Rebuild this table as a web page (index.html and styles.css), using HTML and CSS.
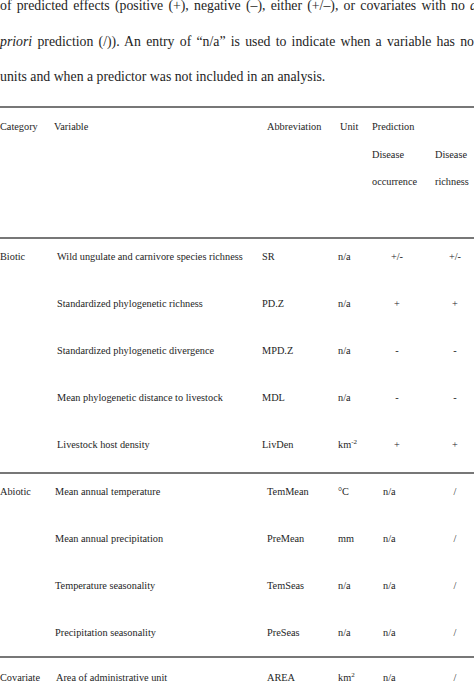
FILE: index.html
```html
<!DOCTYPE html>
<html>
<head>
<meta charset="utf-8">
<link rel="stylesheet" href="styles.css">
</head>
<body>
<div class="page">
  <div class="intro">
    <span class="line full wide">of predicted effects (positive (+), negative (–), either (+/–), or covariates with no <i>a</i></span>
    <span class="line full"><i>priori</i> prediction (/)). An entry of “n/a” is used to indicate when a variable has no</span>
    <span class="line">units and when a predictor was not included in an analysis.</span>
  </div>

  <div class="table">
    <div class="thead">
      <div class="hrow">
        <div class="c-cat">Category</div>
        <div class="c-var">Variable</div>
        <div class="c-abbr shift">Abbreviation</div>
        <div class="c-unit">Unit</div>
        <div class="c-pred">Prediction</div>
      </div>
      <div class="hrow sub">
        <div></div><div></div><div></div><div></div>
        <div class="c-occ-h">Disease<br>occurrence</div>
        <div class="c-rich-h">Disease<br>richness</div>
      </div>
    </div>

    <div class="group biotic">
      <div class="row">
        <div class="c-cat">Biotic</div>
        <div class="c-var">Wild ungulate and carnivore species richness</div>
        <div class="c-abbr">SR</div>
        <div class="c-unit">n/a</div>
        <div class="c-occ">+/-</div>
        <div class="c-rich">+/-</div>
      </div>
      <div class="row">
        <div class="c-cat"></div>
        <div class="c-var">Standardized phylogenetic richness</div>
        <div class="c-abbr">PD.Z</div>
        <div class="c-unit">n/a</div>
        <div class="c-occ">+</div>
        <div class="c-rich">+</div>
      </div>
      <div class="row">
        <div class="c-cat"></div>
        <div class="c-var">Standardized phylogenetic divergence</div>
        <div class="c-abbr">MPD.Z</div>
        <div class="c-unit">n/a</div>
        <div class="c-occ">-</div>
        <div class="c-rich">-</div>
      </div>
      <div class="row">
        <div class="c-cat"></div>
        <div class="c-var">Mean phylogenetic distance to livestock</div>
        <div class="c-abbr">MDL</div>
        <div class="c-unit">n/a</div>
        <div class="c-occ">-</div>
        <div class="c-rich">-</div>
      </div>
      <div class="row">
        <div class="c-cat"></div>
        <div class="c-var">Livestock host density</div>
        <div class="c-abbr">LivDen</div>
        <div class="c-unit">km<sup>-2</sup></div>
        <div class="c-occ">+</div>
        <div class="c-rich">+</div>
      </div>
    </div>

    <div class="group abiotic">
      <div class="row">
        <div class="c-cat">Abiotic</div>
        <div class="c-var">Mean annual temperature</div>
        <div class="c-abbr shift">TemMean</div>
        <div class="c-unit">°C</div>
        <div class="c-occ na">n/a</div>
        <div class="c-rich">/</div>
      </div>
      <div class="row">
        <div class="c-cat"></div>
        <div class="c-var">Mean annual precipitation</div>
        <div class="c-abbr shift">PreMean</div>
        <div class="c-unit">mm</div>
        <div class="c-occ na">n/a</div>
        <div class="c-rich">/</div>
      </div>
      <div class="row">
        <div class="c-cat"></div>
        <div class="c-var">Temperature seasonality</div>
        <div class="c-abbr shift">TemSeas</div>
        <div class="c-unit">n/a</div>
        <div class="c-occ na">n/a</div>
        <div class="c-rich">/</div>
      </div>
      <div class="row">
        <div class="c-cat"></div>
        <div class="c-var">Precipitation seasonality</div>
        <div class="c-abbr shift">PreSeas</div>
        <div class="c-unit">n/a</div>
        <div class="c-occ na">n/a</div>
        <div class="c-rich">/</div>
      </div>
    </div>

    <div class="group covariate">
      <div class="row">
        <div class="c-cat">Covariate</div>
        <div class="c-var">Area of administrative unit</div>
        <div class="c-abbr shift">AREA</div>
        <div class="c-unit">km<sup>2</sup></div>
        <div class="c-occ na">n/a</div>
        <div class="c-rich">/</div>
      </div>
    </div>
  </div>
</div>
</body>
</html>
```

FILE: styles.css
```css
html, body {
  margin: 0;
  padding: 0;
  background: #ffffff;
}

body {
  width: 474px;
  height: 686px;
  overflow: hidden;
  font-family: "Liberation Serif", "Times New Roman", serif;
  color: #1e1e1e;
}

.page {
  width: 478px;
}

.intro {
  margin: -12px 0 11px 0;
  font-size: 13.8px;
  line-height: 35.5px;
}

.intro .line {
  display: block;
  width: 474px;
  white-space: nowrap;
  text-align: left;
}

.intro .line.full {
  white-space: normal;
  text-align: justify;
  text-align-last: justify;
}

.intro .line.wide {
  width: 477px;
}

.table {
  font-size: 10.3px;
  line-height: 14px;
}

.thead {
  border-top: 2px solid #777777;
  padding: 12px 0 41.5px 0;
}

.hrow,
.row {
  display: grid;
  grid-template-columns: 54px 208px 75px 35px 62px 1fr;
}

.hrow.sub {
  margin-top: 7.5px;
  line-height: 27px;
}

.c-pred {
  grid-column: 5 / span 2;
}

.c-rich-h {
  padding-left: 1px;
}

.shift {
  padding-left: 5px;
}

.c-unit {
  padding-left: 1px;
}

.thead .c-unit {
  padding-left: 3px;
}

.group {
  border-top: 2px solid #777777;
  display: grid;
}

.biotic {
  grid-template-rows: repeat(4, 47px) 45px;
}

.biotic .c-var {
  padding-left: 3px;
}

.abiotic {
  grid-template-rows: repeat(3, 47px) 41px;
}

.abiotic .c-var {
  padding-left: 1px;
}

.covariate {
  grid-template-rows: 40px;
}

.covariate .row {
  padding-top: 13px;
}

.covariate .c-var {
  padding-left: 2px;
}

.row {
  padding-top: 11px;
  align-items: start;
}

.c-occ {
  width: 50px;
  text-align: center;
}

.c-occ.na {
  width: auto;
  text-align: left;
  padding-left: 11px;
}

.c-rich {
  width: 42px;
  text-align: center;
}

sup {
  font-size: 7px;
  line-height: 0;
  vertical-align: 4px;
}
```
